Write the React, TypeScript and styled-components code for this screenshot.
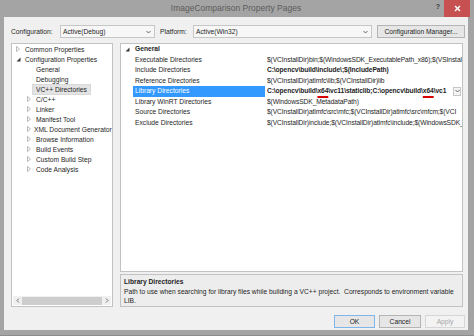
import styled, { createGlobalStyle } from "styled-components";

const GlobalStyle = createGlobalStyle`
  html, body { margin: 0; padding: 0; }
  body {
    background: #9c9c9c;
    font-family: "Liberation Sans", Arial, sans-serif;
    -webkit-font-smoothing: antialiased;
  }
`;

const Window = styled.div`
  width: 474px;
  height: 336px;
  box-sizing: border-box;
  background: #a4a4a4;
  padding: 0 6px 6px 4px;
  display: flex;
  flex-direction: column;
  border-bottom: 1px solid #8c8c8c;
`;

const TitleBar = styled.div`
  height: 17px;
  display: grid;
  grid-template-columns: 1fr auto 1fr;
  align-items: start;
`;

const Title = styled.div`
  grid-column: 2;
  font-size: 8.5px;
  line-height: 17px;
  color: #5c5c5c;
  white-space: nowrap;
`;

const TitleButtons = styled.div`
  grid-column: 3;
  display: flex;
  justify-content: flex-end;
  align-items: flex-start;
  margin-right: -2px;
`;

const HelpGlyph = styled.span`
  font-size: 7px;
  font-weight: bold;
  color: #3c3c3c;
  line-height: 13px;
  margin-right: 4px;
`;

const CloseButton = styled.div`
  width: 26px;
  height: 17px;
  background: #c75050;
  display: flex;
  align-items: center;
  justify-content: center;
`;

const Client = styled.div`
  flex: 1;
  background: #f0f0f0;
  padding: 8px 3px 2px 7px;
  display: flex;
  flex-direction: column;
  font-size: 6.7px;
  color: #1e1e1e;
`;

const ConfigRow = styled.div`
  height: 13px;
  display: flex;
  align-items: center;
`;

const FieldLabel = styled.span<{ $width: number }>`
  width: ${(p) => p.$width}px;
  white-space: nowrap;
`;

const Select = styled.div<{ $width: number }>`
  width: ${(p) => p.$width}px;
  height: 13px;
  box-sizing: border-box;
  border: 1px solid #c6c6c6;
  background: #f7f7f7;
  display: flex;
  align-items: center;
  justify-content: space-between;
  padding: 0 3px 0 2px;
  margin-right: 5px;
`;

const PushButton = styled.div<{ $width: number; $default?: boolean; $disabled?: boolean }>`
  width: ${(p) => p.$width}px;
  height: 13px;
  box-sizing: border-box;
  border: 1px solid ${(p) => (p.$default ? "#7fb5e8" : p.$disabled ? "#d6d6d6" : "#b4b4b4")};
  background: ${(p) => (p.$disabled ? "#f3f3f3" : "#e6e6e6")};
  color: ${(p) => (p.$disabled ? "#a6a6a6" : "#1e1e1e")};
  display: flex;
  align-items: center;
  justify-content: center;
  white-space: nowrap;
`;

const Panels = styled.div`
  margin-top: 5px;
  height: 264px;
  display: flex;
  gap: 7px;
  padding-right: 2px;
`;

const TreePanel = styled.div`
  width: 102px;
  box-sizing: border-box;
  border: 1px solid #c2c2c2;
  background: #fff;
  display: flex;
  flex-direction: column;
`;

const TreeList = styled.div`
  flex: 1;
`;

const TreeRow = styled.div<{ $level: number }>`
  height: 10px;
  display: flex;
  align-items: center;
  padding-left: ${(p) => 4 + p.$level * 11}px;
  white-space: nowrap;
`;

const Toggle = styled.span`
  width: 6px;
  height: 10px;
  display: flex;
  align-items: center;
`;

const TreeLabel = styled.span<{ $selected?: boolean }>`
  padding: 0 3px;
  line-height: 9px;
  background: ${(p) => (p.$selected ? "#e3e3e3" : "transparent")};
  outline: ${(p) => (p.$selected ? "1px solid #d9d9d9" : "none")};
`;

const HScroll = styled.div`
  height: 9px;
  margin: 0 1px 1px;
  display: flex;
  align-items: center;
  background: #f0f0f0;
`;

const ScrollArrow = styled.span`
  width: 9px;
  display: flex;
  justify-content: center;
`;

const ScrollThumb = styled.div`
  flex: 1;
  height: 8px;
  background: #cdcdcd;
`;

const RightColumn = styled.div`
  flex: 1;
  display: flex;
  flex-direction: column;
  gap: 2px;
  min-width: 0;
`;

const Grid = styled.div`
  flex: 1;
  box-sizing: border-box;
  border: 1px solid #c2c2c2;
  background: #fff;
  min-width: 0;
  overflow: hidden;
`;

const GridRow = styled.div`
  height: 10.5px;
  line-height: 10.5px;
  display: grid;
  grid-template-columns: 12px 132px minmax(0, 1fr);
  white-space: nowrap;
`;

const Gutter = styled.span`
  display: flex;
  align-items: center;
  justify-content: center;
`;

const CategoryName = styled.span`
  grid-column: 2 / 4;
  font-weight: bold;
  padding-left: 2px;
`;

const NameCell = styled.span<{ $selected?: boolean }>`
  padding-left: 2px;
  background: ${(p) => (p.$selected ? "#3399ff" : "transparent")};
  color: ${(p) => (p.$selected ? "#fff" : "inherit")};
  overflow: hidden;
`;

const ValueCell = styled.span<{ $bold?: boolean }>`
  display: flex;
  align-items: center;
  min-width: 0;
  padding-left: 2px;
  font-weight: ${(p) => (p.$bold ? "bold" : "normal")};
`;

const ValueText = styled.span`
  flex: 1;
  min-width: 0;
  letter-spacing: -0.1px;
  overflow-x: clip;
  overflow-y: visible;
`;

const Marked = styled.span`
  text-decoration: underline;
  text-decoration-color: #d90000;
  text-decoration-thickness: 2px;
  text-underline-offset: 2.5px;
`;

const DropButton = styled.span`
  width: 8px;
  height: 9px;
  box-sizing: border-box;
  border: 1px solid #c6c6c6;
  background: #f4f4f4;
  display: flex;
  align-items: center;
  justify-content: center;
  margin-right: 1px;
`;

const Description = styled.div`
  height: 33px;
  box-sizing: border-box;
  border: 1px solid #c2c2c2;
  background: #ededed;
  padding: 2px 3px;
  line-height: 9.5px;
`;

const DescTitle = styled.div`
  font-weight: bold;
`;

const Footer = styled.div`
  margin-top: 8px;
  height: 13px;
  display: flex;
  justify-content: flex-end;
  gap: 4px;
`;

function Chevron() {
  return (
    <svg width="5" height="4" viewBox="0 0 5 4">
      <path d="M0.5 1 L2.5 3 L4.5 1" fill="none" stroke="#555" strokeWidth="0.9" />
    </svg>
  );
}

function Collapsed() {
  return (
    <svg width="4" height="6" viewBox="0 0 4 6">
      <path d="M0.5 0.5 L3.5 3 L0.5 5.5 Z" fill="none" stroke="#a8a8a8" strokeWidth="0.8" />
    </svg>
  );
}

function Expanded() {
  return (
    <svg width="5" height="5" viewBox="0 0 5 5">
      <path d="M4.5 0.5 L4.5 4.5 L0.5 4.5 Z" fill="#3a3a3a" />
    </svg>
  );
}

function ScrollChevron({ dir }: { dir: "left" | "right" }) {
  const d = dir === "left" ? "M3 0.5 L1 2.5 L3 4.5" : "M1 0.5 L3 2.5 L1 4.5";
  return (
    <svg width="4" height="5" viewBox="0 0 4 5">
      <path d={d} fill="none" stroke="#606060" strokeWidth="0.9" />
    </svg>
  );
}

type TreeItem = { label: string; level: number; toggle?: "open" | "closed"; selected?: boolean };

const treeItems: TreeItem[] = [
  { label: "Common Properties", level: 0, toggle: "closed" },
  { label: "Configuration Properties", level: 0, toggle: "open" },
  { label: "General", level: 1 },
  { label: "Debugging", level: 1 },
  { label: "VC++ Directories", level: 1, selected: true },
  { label: "C/C++", level: 1, toggle: "closed" },
  { label: "Linker", level: 1, toggle: "closed" },
  { label: "Manifest Tool", level: 1, toggle: "closed" },
  { label: "XML Document Generator", level: 1, toggle: "closed" },
  { label: "Browse Information", level: 1, toggle: "closed" },
  { label: "Build Events", level: 1, toggle: "closed" },
  { label: "Custom Build Step", level: 1, toggle: "closed" },
  { label: "Code Analysis", level: 1, toggle: "closed" },
];

type Prop = { name: string; value: string; bold?: boolean; selected?: boolean };

// values as far as the grid shows them
const properties: Prop[] = [
  { name: "Executable Directories", value: "$(VCInstallDir)bin;$(WindowsSDK_ExecutablePath_x86);$(VSInstallDi" },
  { name: "Include Directories", value: "C:\\opencv\\build\\include\\;$(IncludePath)", bold: true },
  { name: "Reference Directories", value: "$(VCInstallDir)atlmfc\\lib;$(VCInstallDir)lib" },
  { name: "Library Directories", value: "", bold: true, selected: true },
  { name: "Library WinRT Directories", value: "$(WindowsSDK_MetadataPath)" },
  { name: "Source Directories", value: "$(VCInstallDir)atlmfc\\src\\mfc;$(VCInstallDir)atlmfc\\src\\mfcm;$(VCI" },
  { name: "Exclude Directories", value: "$(VCInstallDir)include;$(VCInstallDir)atlmfc\\include;$(WindowsSDK_" },
];

function LibraryValue() {
  return (
    <>
      <ValueText>
        C:\opencv\build\<Marked>x64</Marked>\vc11\staticlib;C:\opencv\build\<Marked>x64</Marked>\vc1
      </ValueText>
      <DropButton>
        <Chevron />
      </DropButton>
    </>
  );
}

export default function App() {
  return (
    <>
      <GlobalStyle />
      <Window>
        <TitleBar>
          <Title>ImageComparison Property Pages</Title>
          <TitleButtons>
            <HelpGlyph>?</HelpGlyph>
            <CloseButton>
              <svg width="7" height="7" viewBox="0 0 7 7">
                <path d="M1 1 L6 6 M6 1 L1 6" stroke="#fff" strokeWidth="1.4" />
              </svg>
            </CloseButton>
          </TitleButtons>
        </TitleBar>
        <Client>
          <ConfigRow>
            <FieldLabel $width={49}>Configuration:</FieldLabel>
            <Select $width={95}>
              <span>Active(Debug)</span>
              <Chevron />
            </Select>
            <FieldLabel $width={33}>Platform:</FieldLabel>
            <Select $width={179}>
              <span>Active(Win32)</span>
              <Chevron />
            </Select>
            <PushButton $width={88}>Configuration Manager...</PushButton>
          </ConfigRow>

          <Panels>
            <TreePanel>
              <TreeList>
                {treeItems.map((item) => (
                  <TreeRow key={item.label} $level={item.level}>
                    <Toggle>
                      {item.toggle === "open" && <Expanded />}
                      {item.toggle === "closed" && <Collapsed />}
                    </Toggle>
                    <TreeLabel $selected={item.selected}>{item.label}</TreeLabel>
                  </TreeRow>
                ))}
              </TreeList>
              <HScroll>
                <ScrollArrow>
                  <ScrollChevron dir="left" />
                </ScrollArrow>
                <ScrollThumb />
                <ScrollArrow>
                  <ScrollChevron dir="right" />
                </ScrollArrow>
              </HScroll>
            </TreePanel>

            <RightColumn>
              <Grid>
                <GridRow>
                  <Gutter>
                    <Expanded />
                  </Gutter>
                  <CategoryName>General</CategoryName>
                </GridRow>
                {properties.map((p) => (
                  <GridRow key={p.name}>
                    <span />
                    <NameCell $selected={p.selected}>{p.name}</NameCell>
                    <ValueCell $bold={p.bold}>
                      {p.selected ? <LibraryValue /> : <ValueText>{p.value}</ValueText>}
                    </ValueCell>
                  </GridRow>
                ))}
              </Grid>
              <Description>
                <DescTitle>Library Directories</DescTitle>
                <div>
                  Path to use when searching for library files while building a VC++ project.&nbsp; Corresponds to
                  environment variable LIB.
                </div>
              </Description>
            </RightColumn>
          </Panels>

          <Footer>
            <PushButton $width={41} $default>
              OK
            </PushButton>
            <PushButton $width={42}>Cancel</PushButton>
            <PushButton $width={40} $disabled>
              Apply
            </PushButton>
          </Footer>
        </Client>
      </Window>
    </>
  );
}
